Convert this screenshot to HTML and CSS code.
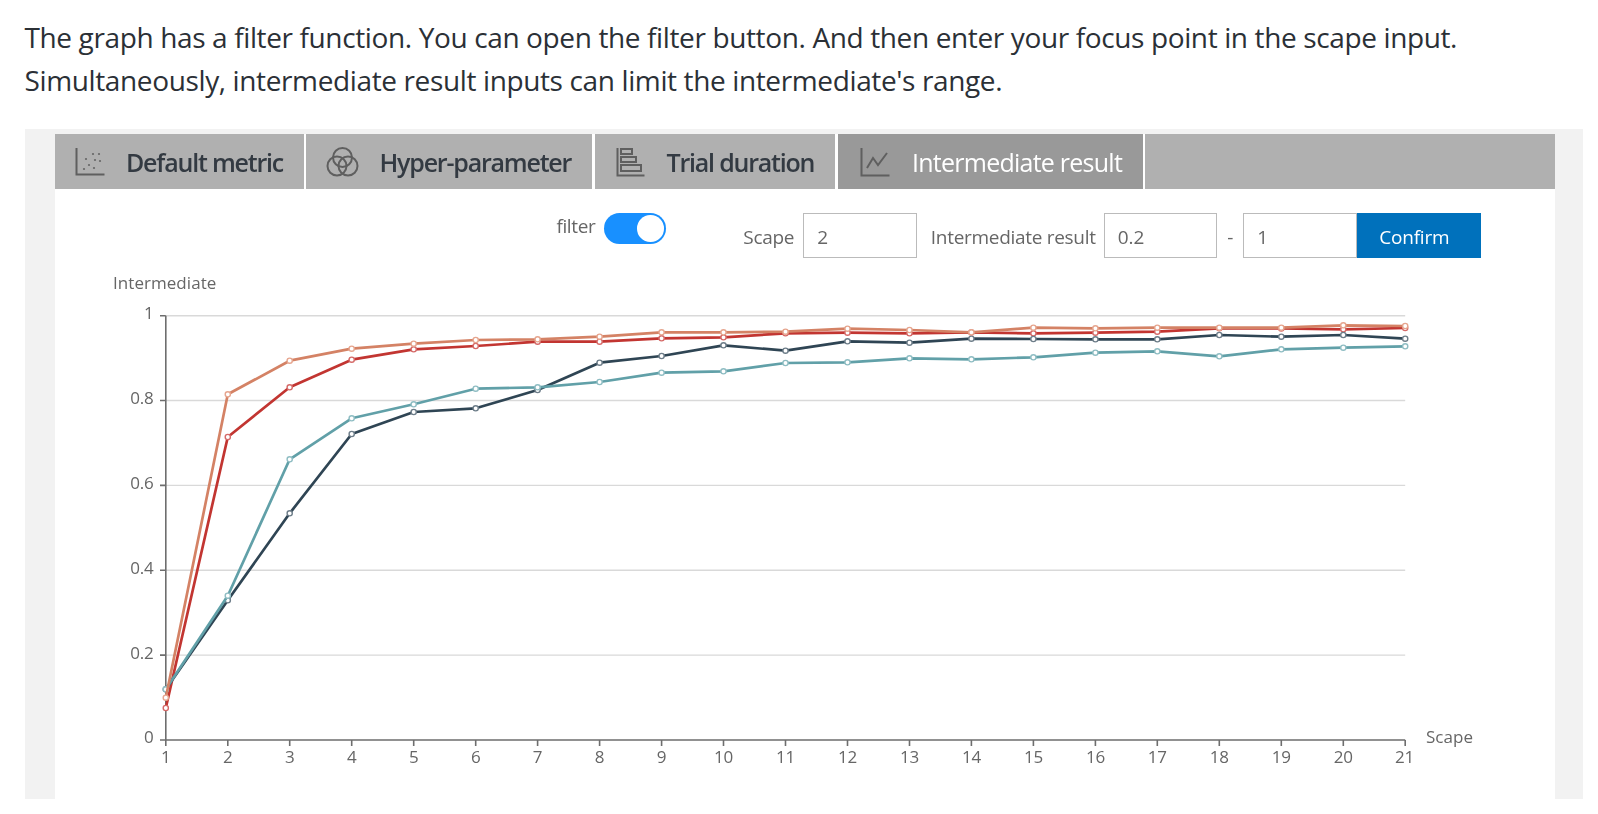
FILE: index.html
```html
<!DOCTYPE html>
<html lang="en">
<head>
<meta charset="utf-8">
<title>Intermediate result graph</title>
<link rel="stylesheet" href="styles.css">
</head>
<body>
<p class="intro">The graph has a filter function. You can open the filter button. And then enter your focus point in the scape input. Simultaneously, intermediate result inputs can limit the intermediate's range.</p>
<section class="panel">
  <div class="sheet">
    <nav class="tabs">
      <div class="tab tab-metric">
        <svg class="icon" viewBox="0 0 30 30"><path class="ico" d="M1.5 1v26.5h28"/><g class="dots"><circle cx="9" cy="22" r="1.1"/><circle cx="14" cy="18" r="1.1"/><circle cx="11" cy="12" r="1.1"/><circle cx="18" cy="7" r="1.1"/><circle cx="24" cy="7" r="1.1"/><circle cx="25" cy="14" r="1.1"/><circle cx="19" cy="21" r="1.1"/><circle cx="20" cy="13" r="1.1"/></g></svg>
        <span>Default metric</span>
      </div>
      <div class="tab tab-param">
        <svg class="icon" viewBox="0 0 32 30"><g class="ico"><circle cx="16" cy="10.5" r="9.5"/><circle cx="10.5" cy="19" r="9.5"/><circle cx="21.5" cy="19" r="9.5"/></g></svg>
        <span>Hyper-parameter</span>
      </div>
      <div class="tab tab-duration">
        <svg class="icon" viewBox="0 0 30 30"><g class="ico"><path d="M1.5 1v27.5h27"/><rect x="5" y="2" width="11" height="5"/><rect x="5" y="10" width="15" height="5"/><rect x="5" y="18" width="20" height="6"/></g></svg>
        <span>Trial duration</span>
      </div>
      <div class="tab tab-result active">
        <svg class="icon" viewBox="0 0 30 30"><g class="ico"><path d="M1.5 1v27.5h28"/><path d="M7 21l6-10 5 7 9-12"/></g></svg>
        <span>Intermediate result</span>
      </div>
      <div class="tab tab-rest"></div>
    </nav>
    <form class="controls">
      <div class="filter">
        <span class="filter-label">filter</span>
        <span class="switch"><span class="knob"></span></span>
      </div>
      <label class="field-label label-scape">Scape</label>
      <input class="field field-scape" value="2">
      <label class="field-label label-result">Intermediate result</label>
      <input class="field field-min" value="0.2">
      <span class="dash">-</span>
      <input class="field field-max" value="1">
      <button class="confirm" type="button">Confirm</button>
    </form>
    <svg class="chart" viewBox="54.5 258 1500.5 541">
      <defs>
        <marker id="m-red" markerUnits="userSpaceOnUse" markerWidth="9" markerHeight="9" refX="4.5" refY="4.5"><circle class="dot" cx="4.5" cy="4.5" r="2.6" stroke="#d56a68"/></marker>
        <marker id="m-dark" markerUnits="userSpaceOnUse" markerWidth="9" markerHeight="9" refX="4.5" refY="4.5"><circle class="dot" cx="4.5" cy="4.5" r="2.6" stroke="#6d7d89"/></marker>
        <marker id="m-teal" markerUnits="userSpaceOnUse" markerWidth="9" markerHeight="9" refX="4.5" refY="4.5"><circle class="dot" cx="4.5" cy="4.5" r="2.6" stroke="#8fbdc3"/></marker>
        <marker id="m-orange" markerUnits="userSpaceOnUse" markerWidth="9" markerHeight="9" refX="4.5" refY="4.5"><circle class="dot" cx="4.5" cy="4.5" r="2.6" stroke="#e6a58e"/></marker>
      </defs>
      <g class="grid">
        <path d="M165.3 315.7H1404.7M165.3 400.5H1404.7M165.3 485.4H1404.7M165.3 570.2H1404.7M165.3 655.1H1404.7"/>
      </g>
      <g class="axis">
        <path d="M165.3 315.7V740M1404.7 740H165.3"/>
        <path d="M159.5 315.7h5.8M159.5 400.5h5.8M159.5 485.4h5.8M159.5 570.2h5.8M159.5 655.1h5.8M159.5 740h5.8"/>
        <path d="M165.3 740v6M227.3 740v6M289.2 740v6M351.2 740v6M413.2 740v6M475.2 740v6M537.1 740v6M599.1 740v6M661.1 740v6M723 740v6M785 740v6M847 740v6M909 740v6M970.9 740v6M1032.9 740v6M1094.9 740v6M1156.8 740v6M1218.8 740v6M1280.8 740v6M1342.8 740v6M1404.7 740v6"/>
      </g>
      <polyline class="line line-red" points="165.3,708 227.3,437 289.2,387.3 351.2,359.7 413.2,349.3 475.2,346 537.1,341.7 599.1,341.7 661.1,338.3 723,337.3 785,333.3 847,332.7 909,333.3 970.9,332.5 1032.9,333.3 1094.9,332.7 1156.8,331.7 1218.8,328.3 1280.8,328.5 1342.8,329.3 1404.7,328"/>
      <polyline class="line line-dark" points="165.3,689.3 227.3,600.3 289.2,513.3 351.2,434 413.2,412 475.2,408.3 537.1,390 599.1,362.7 661.1,356 723,345.3 785,350.7 847,341.3 909,342.7 970.9,338.7 1032.9,339 1094.9,339.3 1156.8,339.3 1218.8,335 1280.8,336.7 1342.8,335 1404.7,338.7"/>
      <polyline class="line line-teal" points="165.3,689.3 227.3,595.7 289.2,459.3 351.2,418.3 413.2,404.3 475.2,388.7 537.1,387.3 599.1,382 661.1,372.7 723,371.3 785,363 847,362.3 909,358.3 970.9,359.3 1032.9,357.3 1094.9,352.7 1156.8,351.3 1218.8,356.3 1280.8,349.3 1342.8,347.7 1404.7,346.3"/>
      <polyline class="line line-orange" points="165.3,697.7 227.3,394.3 289.2,360.7 351.2,348.7 413.2,343.7 475.2,340 537.1,339.3 599.1,336.7 661.1,332.3 723,332.3 785,331.7 847,328.7 909,330 970.9,332.3 1032.9,327.7 1094.9,328.3 1156.8,327.7 1218.8,327.7 1280.8,327.7 1342.8,325.3 1404.7,326"/>
      <g class="labels names">
        <text x="112.5" y="289">Intermediate</text>
        <text x="1425.5" y="743">Scape</text>
      </g>
      <g class="labels y-labels">
        <text x="153" y="319">1</text>
        <text x="153" y="404">0.8</text>
        <text x="153" y="489">0.6</text>
        <text x="153" y="574">0.4</text>
        <text x="153" y="659">0.2</text>
        <text x="153" y="743">0</text>
      </g>
      <g class="labels x-labels">
        <text x="165.3" y="763">1</text><text x="227.3" y="763">2</text><text x="289.2" y="763">3</text><text x="351.2" y="763">4</text><text x="413.2" y="763">5</text><text x="475.2" y="763">6</text><text x="537.1" y="763">7</text><text x="599.1" y="763">8</text><text x="661.1" y="763">9</text><text x="723" y="763">10</text><text x="785" y="763">11</text><text x="847" y="763">12</text><text x="909" y="763">13</text><text x="970.9" y="763">14</text><text x="1032.9" y="763">15</text><text x="1094.9" y="763">16</text><text x="1156.8" y="763">17</text><text x="1218.8" y="763">18</text><text x="1280.8" y="763">19</text><text x="1342.8" y="763">20</text><text x="1404" y="763">21</text>
      </g>
    </svg>
  </div>
</section>
</body>
</html>
```
FILE: styles.css
```css
* { box-sizing: border-box; }
html, body { margin: 0; padding: 0; background: #fff; }
body {
  width: 1598px;
  height: 814px;
  overflow: hidden;
  font-family: "Open Sans", "Noto Sans", sans-serif;
  color: #2b3036;
}
.intro {
  margin: 0;
  padding: 16px 120px 0 24.5px;
  height: 129px;
  font-size: 28px;
  line-height: 43px;
  letter-spacing: -0.37px;
}
.panel {
  margin-left: 25px;
  width: 1558px;
  height: 670px;
  background: #f2f2f2;
  padding: 5.3px 28px 0 29.5px;
}
.sheet {
  background: #fff;
  height: 100%;
  display: flex;
  flex-direction: column;
  filter: blur(0.45px);
}
.tabs {
  display: flex;
  gap: 2.5px;
  height: 54.5px;
  flex: none;
}
.tab {
  background: #b0b0b0;
  display: flex;
  align-items: center;
  gap: 21px;
  padding-left: 20.5px;
  font-size: 25px;
  font-weight: 600;
  letter-spacing: -1.2px;
  color: #333a42;
  white-space: nowrap;
}
.tab-metric { width: 249px; }
.tab-param { width: 286px; padding-left: 19.5px; }
.tab-duration { width: 240.5px; padding-left: 21px; }
.tab-result { width: 305px; padding-left: 22.5px; gap: 22px; }
.tab-rest { flex: 1; }
.active { background: #999; color: #fff; font-weight: 400; letter-spacing: -0.75px; }
.icon { width: 30px; height: 30px; flex: none; }
.tab-param .icon { width: 33px; }
.ico { fill: none; stroke: #5f5f5f; stroke-width: 2; }
.ico path, .ico circle, .ico rect { fill: none; }
.dots { fill: #666; }
.controls {
  flex: none;
  height: 69.3px;
  padding: 24px 74.4px 0 0;
  display: flex;
  justify-content: flex-end;
  align-items: flex-start;
  font-size: 19px;
  color: #666;
}
.filter { display: flex; align-items: flex-start; gap: 9px; margin-right: 77px; }
.filter-label { line-height: 26px; letter-spacing: -0.4px; }
.switch {
  width: 62px;
  height: 31.5px;
  border-radius: 16px;
  background: #1890ff;
  position: relative;
  display: block;
}
.knob {
  position: absolute;
  right: 2.5px;
  top: 2.5px;
  width: 26.5px;
  height: 26.5px;
  border-radius: 50%;
  background: #fff;
}
.field-label { line-height: 49px; letter-spacing: -0.3px; white-space: nowrap; }
.label-scape { margin-right: 9px; }
.label-result { margin: 0 8px 0 14px; }
.field {
  width: 113.7px;
  height: 45px;
  padding: 3px 13px 0;
  border: 1.5px solid #bbb;
  border-radius: 0;
  background: #fff;
  font: inherit;
  color: #666;
  outline: none;
}
.dash { width: 26px; text-align: center; line-height: 49px; }
.confirm {
  width: 123.6px;
  height: 45px;
  border: 0;
  background: #0071bc;
  color: #fff;
  font: inherit;
  letter-spacing: -0.2px;
  padding: 3px 9px 0 0;
}
.chart { display: block; width: 1500.5px; height: 541px; flex: none; }
.grid path { fill: none; stroke: #d9d9d9; stroke-width: 1.4; }
.axis path { fill: none; stroke: #6e6e6e; stroke-width: 1.6; }
.line { fill: none; stroke-width: 2.7; stroke-linejoin: round; }
.line-red { stroke: #c23531; marker: url(#m-red); }
.line-dark { stroke: #2f4554; marker: url(#m-dark); }
.line-teal { stroke: #61a0a8; marker: url(#m-teal); }
.line-orange { stroke: #d48265; marker: url(#m-orange); }
.dot { fill: #fff; stroke-width: 1.4; }
.labels text {
  font-family: "Open Sans", "Noto Sans", sans-serif;
  font-size: 17px;
  fill: #666;
  letter-spacing: -0.2px;
}
.names text { letter-spacing: 0.05px; }
.y-labels text { text-anchor: end; }
.x-labels text { text-anchor: middle; }
```
